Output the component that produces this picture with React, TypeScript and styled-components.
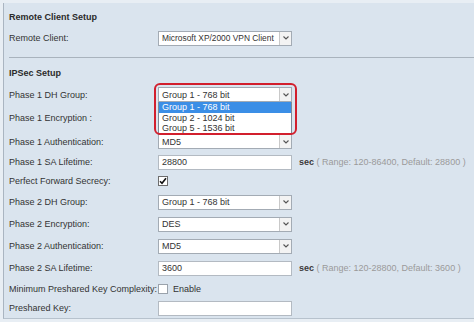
import React from "react";
import styled, { createGlobalStyle } from "styled-components";

const Global = createGlobalStyle`
  html, body { margin: 0; padding: 0; }
  body {
    width: 474px;
    height: 322px;
    overflow: hidden;
    background: #e8eef4;
    font-family: "Liberation Sans", Arial, sans-serif;
  }
`;

const Page = styled.div`
  box-sizing: border-box;
  width: 474px;
  height: 322px;
  padding: 3px 0 0 3px;
  background: #e8eef4;
`;

const Panel = styled.div`
  box-sizing: border-box;
  height: 316px;
  background: #dae4ee;
  border-left: 1px solid #aab5c1;
  border-bottom: 1px solid #b7c2cd;
  padding: 4px 0 0 5px;
  display: flex;
  flex-direction: column;
  overflow: hidden;
`;

const SectionTitle = styled.div`
  height: 20px;
  display: flex;
  align-items: center;
  font-size: 9px;
  font-weight: bold;
  color: #2a2a2a;
`;

const Divider = styled.div`
  height: 1px;
  background: #a9b3bd;
  margin: 8px 0 5px 0;
`;

const Row = styled.div<{ $h: number }>`
  height: ${(p) => p.$h}px;
  display: grid;
  grid-template-columns: 149px auto;
  align-items: center;
  font-size: 9px;
  color: #333;
`;

const Label = styled.div`
  white-space: nowrap;
`;

const Control = styled.div`
  display: flex;
  align-items: center;
  gap: 7px;
  position: relative;
`;

const SelectBox = styled.div`
  box-sizing: border-box;
  width: 134px;
  height: 15px;
  background: #fff;
  border: 1px solid #a3abb4;
  display: flex;
  align-items: center;
  justify-content: space-between;
  padding-left: 3px;
  color: #333;
  position: relative;
  white-space: nowrap;
  overflow: hidden;
`;

const SelectValue = styled.span<{ $size: number }>`
  flex: 1;
  font-size: ${(p) => p.$size}px;
  white-space: nowrap;
`;

const ArrowBox = styled.div`
  box-sizing: border-box;
  flex: none;
  width: 12px;
  height: 13px;
  border-left: 1px solid #c9c9c9;
  background: #f3f3f3;
  display: flex;
  align-items: center;
  justify-content: center;
`;

const TextInput = styled.div`
  box-sizing: border-box;
  width: 134px;
  height: 15px;
  background: #fff;
  border: 1px solid #b3bac2;
  display: flex;
  align-items: center;
  padding-left: 3px;
  font-size: 9px;
  color: #333;
`;

const Hint = styled.span`
  font-size: 9px;
  color: #9a9a9a;
  white-space: nowrap;
  b {
    color: #3a3a3a;
    font-weight: bold;
  }
`;

const Check = styled.div<{ $checked?: boolean }>`
  box-sizing: border-box;
  width: 10px;
  height: 10px;
  background: #fff;
  border: 1px solid ${(p) => (p.$checked ? "#6d6d6d" : "#9aa2ab")};
  display: flex;
  align-items: center;
  justify-content: center;
`;

const CheckLabel = styled.span`
  font-size: 9px;
  color: #333;
  margin-left: -2px;
`;

const Highlight = styled.div`
  position: absolute;
  left: -4px;
  top: -4px;
  width: 143px;
  height: 52px;
  box-sizing: border-box;
  border: 2px solid #d21f2d;
  border-radius: 6px;
  z-index: 3;
  pointer-events: none;
`;

const OptionList = styled.div`
  position: absolute;
  left: 0;
  top: 15px;
  width: 134px;
  box-sizing: border-box;
  background: #fff;
  border: 1px solid #7e8a96;
  border-top: none;
  z-index: 2;
`;

const Option = styled.div<{ $selected?: boolean }>`
  height: 10.5px;
  line-height: 10.5px;
  padding-left: 3px;
  font-size: 9px;
  color: ${(p) => (p.$selected ? "#fff" : "#333")};
  background: ${(p) => (p.$selected ? "#3b8ee6" : "transparent")};
`;

const Chevron = () => (
  <svg width="6" height="4" viewBox="0 0 6 4">
    <path d="M0.5 0.5 L3 3 L5.5 0.5" fill="none" stroke="#555" strokeWidth="1.1" />
  </svg>
);

const Tick = () => (
  <svg width="8" height="8" viewBox="0 0 8 8">
    <path d="M1 4.2 L3 6.3 L7 1.2" fill="none" stroke="#111" strokeWidth="1.6" />
  </svg>
);

const Select: React.FC<{ value?: string; size?: number }> = ({ value, size = 9 }) => (
  <SelectBox>
    <SelectValue $size={size}>{value}</SelectValue>
    <ArrowBox>
      <Chevron />
    </ArrowBox>
  </SelectBox>
);

export default function App() {
  return (
    <>
      <Global />
      <Page>
        <Panel>
          <SectionTitle>Remote Client Setup</SectionTitle>
          <Row $h={22}>
            <Label>Remote Client:</Label>
            <Control>
              <Select value="Microsoft XP/2000 VPN Client" size={8.4} />
            </Control>
          </Row>
          <Divider />
          <SectionTitle>IPSec Setup</SectionTitle>
          <Row $h={23}>
            <Label>Phase 1 DH Group:</Label>
            <Control>
              <Select value="Group 1 - 768 bit" />
              <OptionList>
                <Option $selected>Group 1 - 768 bit</Option>
                <Option>Group 2 - 1024 bit</Option>
                <Option>Group 5 - 1536 bit</Option>
              </OptionList>
              <Highlight />
            </Control>
          </Row>
          <Row $h={24}>
            <Label>Phase 1 Encryption :</Label>
            <Control>
              <Select />
            </Control>
          </Row>
          <Row $h={23}>
            <Label>Phase 1 Authentication:</Label>
            <Control>
              <Select value="MD5" />
            </Control>
          </Row>
          <Row $h={18}>
            <Label>Phase 1 SA Lifetime:</Label>
            <Control>
              <TextInput>28800</TextInput>
              <Hint>
                <b>sec</b> ( Range: 120-86400, Default: 28800 )
              </Hint>
            </Control>
          </Row>
          <Row $h={20}>
            <Label>Perfect Forward Secrecy:</Label>
            <Control>
              <Check $checked>
                <Tick />
              </Check>
            </Control>
          </Row>
          <Row $h={22}>
            <Label>Phase 2 DH Group:</Label>
            <Control>
              <Select value="Group 1 - 768 bit" />
            </Control>
          </Row>
          <Row $h={22}>
            <Label>Phase 2 Encryption:</Label>
            <Control>
              <Select value="DES" />
            </Control>
          </Row>
          <Row $h={22}>
            <Label>Phase 2 Authentication:</Label>
            <Control>
              <Select value="MD5" />
            </Control>
          </Row>
          <Row $h={22}>
            <Label>Phase 2 SA Lifetime:</Label>
            <Control>
              <TextInput>3600</TextInput>
              <Hint>
                <b>sec</b> ( Range: 120-28800, Default: 3600 )
              </Hint>
            </Control>
          </Row>
          <Row $h={20}>
            <Label>Minimum Preshared Key Complexity:</Label>
            <Control>
              <Check />
              <CheckLabel>Enable</CheckLabel>
            </Control>
          </Row>
          <Row $h={18}>
            <Label>Preshared Key:</Label>
            <Control>
              <TextInput />
            </Control>
          </Row>
        </Panel>
      </Page>
    </>
  );
}
